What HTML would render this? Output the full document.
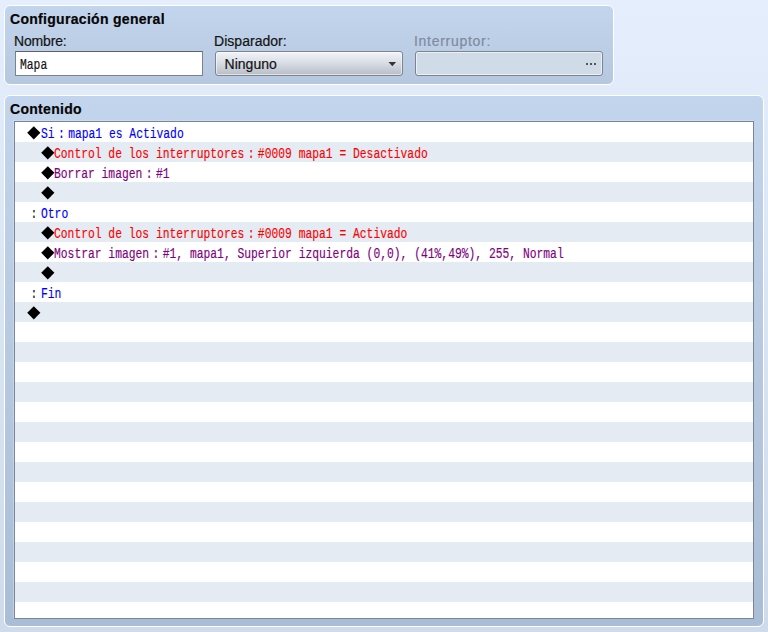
<!DOCTYPE html>
<html>
<head>
<meta charset="utf-8">
<title>Eventos comunes</title>
<style>
html,body{margin:0;padding:0;}
body{width:768px;height:632px;overflow:hidden;position:relative;
  background:linear-gradient(to bottom,#e4eefd 0px,#cfdbea 632px);
  font-family:"Liberation Sans",sans-serif;font-size:14px;color:#141414;}
.abs{position:absolute;}
.box{position:absolute;box-sizing:border-box;border:1px solid #ffffff;border-radius:6px;}
#box1{left:4px;top:5px;width:610px;height:80px;
  background:linear-gradient(to bottom,#c3d5ec,#b5c8e0);}
#box2{left:4px;top:95px;width:760px;height:532px;
  background:linear-gradient(to bottom,#c3d5ec,#aabdd6);}
.title{position:absolute;color:#050505;font-weight:bold;font-size:14px;line-height:16px;letter-spacing:0.3px;white-space:nowrap;-webkit-text-stroke:0.2px currentColor;}
.lbl{position:absolute;font-size:14px;line-height:16px;white-space:nowrap;letter-spacing:0.15px;-webkit-text-stroke:0.2px currentColor;}
#name{position:absolute;left:15px;top:51px;width:188px;height:25px;box-sizing:border-box;
  background:#fff;border:1px solid #7b828c;border-top-color:#5c636d;}
.mono{font-family:"Liberation Mono",monospace;font-size:14.7px;line-height:20px;white-space:pre;
  display:inline-block;transform:scaleX(0.771);transform-origin:0 0;-webkit-text-stroke:0.15px currentColor;}
#combo{position:absolute;left:215px;top:51px;width:188px;height:25px;box-sizing:border-box;
  border:1px solid #80858d;border-radius:3px;
  background:linear-gradient(to bottom,#f1f4f8 0%,#dadfe6 45%,#b7bdc6 100%);
  box-shadow:inset 0 0 0 1px rgba(255,255,255,0.55);}
#btn{position:absolute;left:415px;top:51px;width:188px;height:25px;box-sizing:border-box;
  border:1px solid #7e848d;border-radius:3px;background:#d0dbe8;
  box-shadow:inset 0 0 0 1px rgba(255,255,255,0.6);}
#list{position:absolute;left:14px;top:121px;width:740px;height:498px;box-sizing:border-box;
  border:1px solid #7c8592;background:#fff;overflow:hidden;box-shadow:-1px -1px 0 rgba(205,225,250,0.55);}
.row{position:absolute;left:0;width:737.5px;height:20px;}
.row.alt{background:#e4ebf3;}
.t{position:absolute;top:1.6px;height:20px;margin-left:-0.3px;}
.dia{position:absolute;width:13.6px;height:13.6px;top:4px;margin-left:-0.1px;}
.blue{color:#0000ff;}
.red{color:#ff0000;}
.pur{color:#800080;}
.fw{display:inline-block;width:2ch;text-align:center;}
.col{position:absolute;top:0;width:13.6px;height:20px;}
.col i{position:absolute;left:5.8px;width:2px;height:2px;background:currentColor;}
</style>
</head>
<body>

<div class="box" id="box1"></div>
<div class="title" style="left:10px;top:11px;">Configuración general</div>
<div class="lbl" style="left:14px;top:33px;letter-spacing:-0.16px;">Nombre:</div>
<div class="lbl" style="left:214px;top:33px;letter-spacing:0.03px;">Disparador:</div>
<div class="lbl" style="left:414px;top:33px;color:#7f8a9f;letter-spacing:0.72px;">Interruptor:</div>

<div id="name"><span class="mono" style="position:absolute;left:3.5px;top:3px;-webkit-text-stroke:0.2px currentColor;">Mapa</span></div>

<div id="combo">
  <div class="lbl" style="left:8.6px;top:4px;letter-spacing:0;">Ninguno</div>
  <svg class="abs" style="left:171.6px;top:10.2px;" width="9" height="5" viewBox="0 0 9 5"><path d="M0.5 0 L8.1 0 L4.3 4.3 Z" fill="#333"/></svg>
</div>

<div id="btn">
  <div class="abs" style="left:170px;top:11px;width:2px;height:2px;background:#555;"></div>
  <div class="abs" style="left:174px;top:11px;width:2px;height:2px;background:#555;"></div>
  <div class="abs" style="left:178px;top:11px;width:2px;height:2px;background:#555;"></div>
</div>

<div class="box" id="box2"></div>
<div class="title" style="left:10px;top:101px;">Contenido</div>

<div id="list">
<div class="row" style="top:0px"><svg class="dia" style="left:12.4px" viewBox="0 0 13 13"><path d="M6.5 0.2 L12.8 6.5 L6.5 12.8 L0.2 6.5 Z" fill="#000"/></svg><span class="t mono blue" style="left:26.0px">Si<span class="fw">:</span>mapa1 es Activado</span></div>
<div class="row alt" style="top:20px"><svg class="dia" style="left:26.0px" viewBox="0 0 13 13"><path d="M6.5 0.2 L12.8 6.5 L6.5 12.8 L0.2 6.5 Z" fill="#000"/></svg><span class="t mono red" style="left:39.6px">Control de los interruptores<span class="fw">:</span>#0009 mapa1 = Desactivado</span></div>
<div class="row" style="top:40px"><svg class="dia" style="left:26.0px" viewBox="0 0 13 13"><path d="M6.5 0.2 L12.8 6.5 L6.5 12.8 L0.2 6.5 Z" fill="#000"/></svg><span class="t mono pur" style="left:39.6px">Borrar imagen<span class="fw">:</span>#1</span></div>
<div class="row alt" style="top:60px"><svg class="dia" style="left:26.0px" viewBox="0 0 13 13"><path d="M6.5 0.2 L12.8 6.5 L6.5 12.8 L0.2 6.5 Z" fill="#000"/></svg></div>
<div class="row" style="top:80px"><span class="t mono" style="left:12.4px;color:#222"><span class="fw">:</span></span><span class="t mono blue" style="left:26.0px">Otro</span></div>
<div class="row alt" style="top:100px"><svg class="dia" style="left:26.0px" viewBox="0 0 13 13"><path d="M6.5 0.2 L12.8 6.5 L6.5 12.8 L0.2 6.5 Z" fill="#000"/></svg><span class="t mono red" style="left:39.6px">Control de los interruptores<span class="fw">:</span>#0009 mapa1 = Activado</span></div>
<div class="row" style="top:120px"><svg class="dia" style="left:26.0px" viewBox="0 0 13 13"><path d="M6.5 0.2 L12.8 6.5 L6.5 12.8 L0.2 6.5 Z" fill="#000"/></svg><span class="t mono pur" style="left:39.6px">Mostrar imagen<span class="fw">:</span>#1, mapa1, Superior izquierda (0,0), (41%,49%), 255, Normal</span></div>
<div class="row alt" style="top:140px"><svg class="dia" style="left:26.0px" viewBox="0 0 13 13"><path d="M6.5 0.2 L12.8 6.5 L6.5 12.8 L0.2 6.5 Z" fill="#000"/></svg></div>
<div class="row" style="top:160px"><span class="t mono" style="left:12.4px;color:#222"><span class="fw">:</span></span><span class="t mono blue" style="left:26.0px">Fin</span></div>
<div class="row alt" style="top:180px"><svg class="dia" style="left:12.4px" viewBox="0 0 13 13"><path d="M6.5 0.2 L12.8 6.5 L6.5 12.8 L0.2 6.5 Z" fill="#000"/></svg></div>
<div class="row" style="top:200px"></div>
<div class="row alt" style="top:220px"></div>
<div class="row" style="top:240px"></div>
<div class="row alt" style="top:260px"></div>
<div class="row" style="top:280px"></div>
<div class="row alt" style="top:300px"></div>
<div class="row" style="top:320px"></div>
<div class="row alt" style="top:340px"></div>
<div class="row" style="top:360px"></div>
<div class="row alt" style="top:380px"></div>
<div class="row" style="top:400px"></div>
<div class="row alt" style="top:420px"></div>
<div class="row" style="top:440px"></div>
<div class="row alt" style="top:460px"></div>
<div class="row" style="top:480px"></div>
</div>

</body>
</html>
